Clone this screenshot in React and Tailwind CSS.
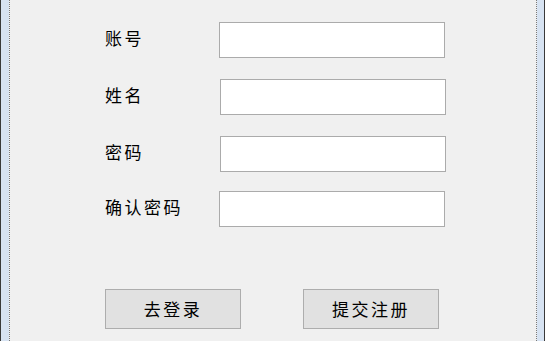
export default function App() {
  const rows = [
    { label: '账号', shift: 'ml-0', gap: 'mt-0' },
    { label: '姓名', shift: 'ml-px', gap: 'mt-[21px]' },
    { label: '密码', shift: 'ml-px', gap: 'mt-[21px]' },
    { label: '确认密码', shift: 'ml-0', gap: 'mt-[19px]' },
  ];

  return (
    <div
      className="flex h-[341px] w-[545px] bg-[#f0f0f0] text-black"
      style={{ fontFamily: '"Noto Sans CJK SC", "Noto Sans", sans-serif' }}
    >
      {/* left window frame */}
      <div className="w-[9px] shrink-0 border-l border-[#3a3a3a] bg-[#d7e3f2]" />
      <div className="w-0 shrink-0 border-l border-dotted border-[#7a7a7a]" />

      <div className="flex flex-1 flex-col pl-[95px] pt-[22px]">
        {rows.map((r) => (
          <div key={r.label} className={`flex h-[36px] items-center ${r.gap}`}>
            <span className="w-[114px] shrink-0 pb-[6px] text-[17px] leading-none tracking-[2.5px]">{r.label}</span>
            <input
              type="text"
              className={`h-[36px] w-[226px] border border-[#ababab] bg-white outline-none ${r.shift}`}
            />
          </div>
        ))}

        <div className="mt-[62px] flex gap-[62px]">
          <button className="flex h-[40px] w-[136px] items-center justify-center border border-[#adadad] bg-[#e1e1e1] text-[17px] tracking-[2.5px]">
            去登录
          </button>
          <button className="flex h-[40px] w-[136px] items-center justify-center border border-[#adadad] bg-[#e1e1e1] text-[17px] tracking-[2.5px]">
            提交注册
          </button>
        </div>
      </div>

      {/* right window frame */}
      <div className="w-0 shrink-0 border-l border-dotted border-[#7a7a7a]" />
      <div className="w-[8px] shrink-0 border-r border-[#3a3a3a] bg-[#d7e3f2]" />
    </div>
  );
}
